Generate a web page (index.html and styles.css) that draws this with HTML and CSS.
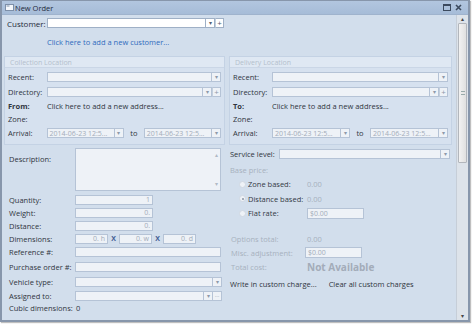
FILE: index.html
```html
<!DOCTYPE html>
<html>
<head>
<meta charset="utf-8">
<link rel="stylesheet" href="styles.css">
</head>
<body>
<div class="window">
  <div class="titlebar">
    <svg class="ticon" width="9" height="7" viewBox="0 0 9 7"><rect x="0.5" y="0.5" width="8" height="6" fill="#f4f7fb" stroke="#7d8fa8"/><rect x="1.5" y="1.5" width="3" height="1" fill="#7d8fa8"/></svg>
    <span class="ttext">New Order</span>
    <span class="tspacer"></span>
    <svg class="tbtn" width="8" height="7" viewBox="0 0 8 7"><rect x="0.5" y="0.5" width="7" height="6" fill="none" stroke="#3c4a5e"/><rect x="0.5" y="0.5" width="7" height="1.5" fill="#3c4a5e"/></svg>
    <svg class="tbtn" width="7" height="7" viewBox="0 0 7 7"><path d="M1 1L6 6M6 1L1 6" stroke="#3c4a5e" stroke-width="1.6"/></svg>
  </div>
  <div class="body">
    <div class="main">
      <div class="row customer">
        <span class="lbl lbl-cust">Customer:</span>
        <span class="field white w-cust"></span>
        <span class="btn white">▾</span>
        <span class="btn white plus">+</span>
      </div>
      <div class="link cust-link">Click here to add a new customer...</div>

      <div class="groups">
        <div class="group">
          <div class="ghead">Collection Location</div>
          <div class="grow"><span class="lbl glbl">Recent:</span><span class="field dis grow-f"></span><span class="btn dis">▾</span></div>
          <div class="grow"><span class="lbl glbl">Directory:</span><span class="field dis grow-f"></span><span class="btn dis">▾</span><span class="btn dis plus">+</span></div>
          <div class="grow tall"><span class="lbl glbl bold">From:</span><span class="addr">Click here to add a new address...</span></div>
          <div class="grow tall"><span class="lbl glbl">Zone:</span></div>
          <div class="grow arr"><span class="lbl glbl">Arrival:</span><span class="field dis date">2014-06-23 12:5...</span><span class="btn dis">▾</span><span class="to">to</span><span class="field dis date">2014-06-23 12:5...</span><span class="btn dis">▾</span></div>
        </div>
        <div class="group">
          <div class="ghead">Delivery Location</div>
          <div class="grow"><span class="lbl glbl">Recent:</span><span class="field dis grow-f"></span><span class="btn dis">▾</span></div>
          <div class="grow"><span class="lbl glbl">Directory:</span><span class="field dis grow-f"></span><span class="btn dis">▾</span><span class="btn dis plus">+</span></div>
          <div class="grow tall"><span class="lbl glbl bold">To:</span><span class="addr">Click here to add a new address...</span></div>
          <div class="grow tall"><span class="lbl glbl">Zone:</span></div>
          <div class="grow arr"><span class="lbl glbl">Arrival:</span><span class="field dis date">2014-06-23 12:5...</span><span class="btn dis">▾</span><span class="to">to</span><span class="field dis date">2014-06-23 12:5...</span><span class="btn dis">▾</span></div>
        </div>
      </div>

      <div class="lower">
        <div class="lcol">
          <div class="lrow desc"><span class="lbl llbl">Description:</span><span class="textarea"><span class="ta-up">▴</span><span class="ta-dn">▾</span></span></div>
          <div class="lrow"><span class="lbl llbl">Quantity:</span><span class="field dis num w-num">1</span></div>
          <div class="lrow"><span class="lbl llbl">Weight:</span><span class="field dis num w-num">0.</span></div>
          <div class="lrow"><span class="lbl llbl">Distance:</span><span class="field dis num w-num">0.</span></div>
          <div class="lrow"><span class="lbl llbl">Dimensions:</span><span class="field dis num w-dim">0. h</span><span class="x">X</span><span class="field dis num w-dim">0. w</span><span class="x">X</span><span class="field dis num w-dim">0. d</span></div>
          <div class="lrow r14"><span class="lbl llbl">Reference #:</span><span class="field dis w-full"></span></div>
          <div class="lrow r15"><span class="lbl llbl">Purchase order #:</span><span class="field dis w-full"></span></div>
          <div class="lrow r14"><span class="lbl llbl">Vehicle type:</span><span class="field dis w-fill"></span><span class="btn dis">▾</span></div>
          <div class="lrow r14"><span class="lbl llbl">Assigned to:</span><span class="field dis w-fill"></span><span class="btn dis">▾</span><span class="btn dis">···</span></div>
          <div class="lrow r9"><span class="lbl llbl">Cubic dimensions:</span><span class="cubic">0</span></div>
        </div>
        <div class="rcol">
          <div class="rrow svc"><span class="lbl svc-lbl">Service level:</span><span class="field dis w-svc"></span><span class="btn dis">▾</span></div>
          <div class="rrow base"><span class="muted">Base price:</span></div>
          <div class="rrow radio-row"><span class="radio"></span><span class="lbl rlbl">Zone based:</span><span class="val">0.00</span></div>
          <div class="rrow radio-row"><span class="radio on"></span><span class="lbl rlbl">Distance based:</span><span class="val">0.00</span></div>
          <div class="rrow radio-row"><span class="radio"></span><span class="lbl rlbl">Flat rate:</span><span class="field dis money">$0.00</span></div>
          <div class="rrow opts"><span class="muted tlbl">Options total:</span><span class="val pad">0.00</span></div>
          <div class="rrow r14"><span class="muted tlbl">Misc. adjustment:</span><span class="field dis money">$0.00</span></div>
          <div class="rrow r16"><span class="muted tlbl">Total cost:</span><span class="na">Not Available</span></div>
          <div class="rrow links"><span class="plain">Write in custom charge...</span><span class="plain">Clear all custom charges</span></div>
        </div>
      </div>
    </div>
    <div class="scrollbar">
      <div class="sarrow">▴</div>
      <div class="thumb"><span class="grip"></span></div>
      <div class="strack"></div>
      <div class="sarrow">▾</div>
    </div>
  </div>
</div>
</body>
</html>
```
FILE: styles.css
```css
* { box-sizing: border-box; }
html, body { margin: 0; padding: 0; background: #ffffff; }
body {
  font-family: "Open Sans", "Noto Sans", sans-serif;
  font-size: 7.5px;
  color: #2f3540;
  width: 474px;
  height: 331px;
  overflow: hidden;
}
.window {
  width: 470px;
  height: 322px;
  border: 2px solid #8796ab;
  border-top-width: 1px;
  background: #d2deec;
  display: flex;
  flex-direction: column;
  box-shadow: 1px 1px 1px rgba(0,0,0,0.25);
}
.titlebar {
  height: 14px;
  background: linear-gradient(#b2c6df, #a6bcd8);
  display: flex;
  align-items: center;
  padding: 0 6px 0 3px;
  border-bottom: 1px solid #9fb3cd;
}
.ticon { margin-right: 1px; }
.ttext { color: #1f2a3a; font-size: 7.5px; }
.tspacer { flex: 1; }
.tbtn { margin-left: 4px; }
.body { flex: 1; display: flex; min-height: 0; }
.main { flex: 1; padding: 1px 2px 0 2px; display: flex; flex-direction: column; }
.lbl { white-space: nowrap; }
.row { display: flex; align-items: center; }
.customer { height: 12px; margin-top: 1px; }
.lbl-cust { width: 43px; padding-left: 3px; color: #1f2a3a; font-size: 8px; }
.field {
  height: 10px;
  border: 1px solid #b5c3d6;
  display: inline-flex;
  align-items: center;
  padding: 0 2px;
  white-space: nowrap;
  overflow: hidden;
  font-size: 7px;
}
.white { background: #ffffff; border-color: #9fb0c6; }
.dis { background: #eef2f7; color: #a3acb9; }
.w-cust { width: 159px; }
.btn {
  width: 9px;
  height: 10px;
  border: 1px solid #b5c3d6;
  border-left: none;
  display: inline-flex;
  align-items: center;
  justify-content: center;
  font-size: 6px;
  color: #8d99aa;
  line-height: 1;
}
.btn.white { border-color: #9fb0c6; color: #556070; }
.btn.plus { font-size: 8px; border-left: 1px solid #c3cfdd; width: 9px; margin-left: 0; }
.cust-link { margin: 8px 0 0 43px; height: 11px; }
.link { color: #2f6bbd; }
.groups { display: flex; gap: 4px; margin-top: 8px; }
.group {
  width: 221px;
  height: 89px;
  background: #d6e1ef;
  border: 1px solid #c4d2e4;
  display: flex;
  flex-direction: column;
}
.group + .group { width: 223px; }
.ghead {
  height: 11px;
  background: #dfe8f3;
  color: #b4bfcc;
  font-size: 7px;
  padding-left: 5px;
  line-height: 11px;
  border-bottom: 1px solid #cad6e6;
}
.grow { display: flex; align-items: center; height: 15px; padding-left: 3px; }
.grow:nth-child(2) { margin-top: 1px; }
.grow.tall { height: 13px; }
.grow.arr { height: 16px; }
.glbl { width: 39px; }
.bold { font-weight: 700; }
.grow-f { flex: 1; }
.grow > .btn:last-child { margin-right: 3px; }
.addr { color: #2f3540; }
.date { width: 69px; }
.to { width: 20px; text-align: center; }
.lower { display: flex; gap: 4px; margin-top: 1px; }
.lcol { width: 221px; display: flex; flex-direction: column; padding-top: 1px; }
.rcol { width: 223px; display: flex; flex-direction: column; }
.lrow { display: flex; align-items: center; height: 13px; padding-left: 5px; }
.lrow.desc { align-items: flex-start; height: 46px; padding-top: 1px; }
.lrow.desc .llbl { margin-top: 6px; }
.r14 { height: 14px; }
.r15 { height: 16px; }
.r9 { height: 9px; }
.r16 { height: 16px; }
.llbl { width: 66px; }
.textarea {
  width: 146px;
  height: 43px;
  background: #eef2f7;
  border: 1px solid #b5c3d6;
  position: relative;
}
.ta-up, .ta-dn { position: absolute; right: 2px; font-size: 6px; color: #b0b9c5; }
.ta-up { top: 2px; }
.ta-dn { bottom: 2px; }
.num { justify-content: flex-end; }
.w-num { width: 78px; }
.w-dim { width: 33px; }
.x { width: 11px; text-align: center; color: #3e5c93; font-weight: 700; font-size: 7px; }
.w-full { width: 146px; }
.w-fill { flex: 1; }
.lrow > .btn:last-child { margin-right: 3px; }
.cubic { margin-left: 1px; }
.rrow { display: flex; align-items: center; height: 14px; }
.svc { height: 15px; margin-top: 0; padding-left: 1px; }
.svc-lbl { width: 49px; }
.w-svc { flex: 1; }
.svc .btn { margin-right: 2px; }
.muted { color: #a7b1be; }
.base { height: 14px; padding-left: 1px; margin-top: 2px; }
.radio-row { height: 14.5px; padding-left: 10px; }
.radio {
  width: 7px; height: 7px; border-radius: 50%;
  background: #eef2f7; border: 1px solid #d0d8e2;
  margin-right: 2px; position: relative;
}
.radio.on::after {
  content: ""; position: absolute; left: 1.5px; top: 1.5px;
  width: 2px; height: 2px; border-radius: 50%; background: #8a95a5;
}
.rlbl { width: 59px; color: #333a45; }
.val { color: #a7b1be; }
.val.pad { padding-left: 2px; }
.money { width: 57px; height: 11px; }
.opts { margin-top: 12px; height: 13px; padding-left: 1px; }
.tlbl { width: 75px; padding-left: 1px; }
.rrow.r14, .rrow.r16 { padding-left: 1px; }
.na { font-size: 10px; font-weight: 700; color: #a3acb9; margin-left: 2px; font-family: "Open Sans", sans-serif; }
.links { height: 16px; gap: 12px; padding-left: 1px; margin-top: 2px; }
.plain { color: #2f3540; }
.scrollbar {
  width: 12px;
  display: flex;
  flex-direction: column;
  background: #dde3ea;
  border-left: 1px solid #c6ced8;
}
.sarrow { height: 8px; font-size: 6px; color: #444; text-align: center; line-height: 8px; }
.thumb {
  height: 140px;
  margin: 0 1px;
  background: linear-gradient(90deg, #f2f2f2, #e0e0e0);
  border: 1px solid #b2b6bc;
  border-radius: 1px;
  display: flex;
  align-items: center;
  justify-content: center;
}
.grip { width: 4px; height: 4px; border-top: 1px solid #9aa; border-bottom: 1px solid #9aa; }
.strack { flex: 1; }
```
